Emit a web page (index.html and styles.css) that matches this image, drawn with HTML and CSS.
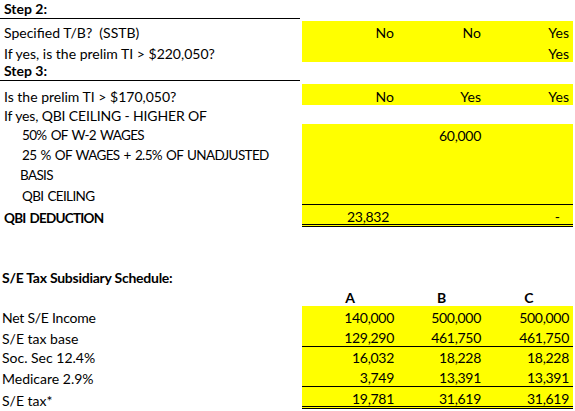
FILE: index.html
```html
<!DOCTYPE html>
<html>
<head>
<meta charset="utf-8">
<link rel="stylesheet" href="styles.css">
</head>
<body>
<div class="sheet">
  <div class="row h21 step">
    <div class="label bold underline">Step 2:</div>
    <div></div><div></div><div></div>
  </div>
  <div class="row h20">
    <div class="label">Specified T/B?&nbsp; (SSTB)</div>
    <div class="val y">No</div><div class="val y">No</div><div class="val y">Yes</div>
  </div>
  <div class="row h21">
    <div class="label">If yes, is the prelim TI &gt; $220,050?</div>
    <div class="val y"></div><div class="val y"></div><div class="val y">Yes</div>
  </div>
  <div class="row h22 step">
    <div class="label bold underline">Step 3:</div>
    <div></div><div></div><div></div>
  </div>
  <div class="row h21">
    <div class="label">Is the prelim TI &gt; $170,050?</div>
    <div class="val y">No</div><div class="val y">Yes</div><div class="val y">Yes</div>
  </div>
  <div class="row h19">
    <div class="label caps-mix">If yes, QBI CEILING - HIGHER OF</div>
    <div></div><div></div><div></div>
  </div>
  <div class="row h20">
    <div class="label ind caps">50% OF W-2 WAGES</div>
    <div class="val y"></div><div class="val y num">60,000</div><div class="val y"></div>
  </div>
  <div class="row h20">
    <div class="label ind caps">25 % OF WAGES + 2.5% OF UNADJUSTED</div>
    <div class="val y"></div><div class="val y"></div><div class="val y"></div>
  </div>
  <div class="row h20">
    <div class="label ind2 caps">BASIS</div>
    <div class="val y"></div><div class="val y"></div><div class="val y"></div>
  </div>
  <div class="row h21">
    <div class="label ind caps">QBI CEILING</div>
    <div class="val y line"></div><div class="val y line"></div><div class="val y line"></div>
  </div>
  <div class="row h22">
    <div class="label bold caps-b">QBI DEDUCTION</div>
    <div class="val y dbl acct num">23,832</div><div class="val y dbl"></div><div class="val y dbl dash">-</div>
  </div>
  <div class="spacer"></div>
  <div class="row h20 low">
    <div class="label bold tight">S/E Tax Subsidiary Schedule:</div>
    <div></div><div></div><div></div>
  </div>
  <div class="row h20 low">
    <div class="label"></div>
    <div class="hdr bold">A</div><div class="hdr bold">B</div><div class="hdr bold">C</div>
  </div>
  <div class="row h20 low">
    <div class="label tight">Net S/E Income</div>
    <div class="val y num">140,000</div><div class="val y num">500,000</div><div class="val y num">500,000</div>
  </div>
  <div class="row h21 low">
    <div class="label">S/E tax base</div>
    <div class="val y line num">129,290</div><div class="val y line num">461,750</div><div class="val y line num">461,750</div>
  </div>
  <div class="row h19 low">
    <div class="label">Soc. Sec 12.4%</div>
    <div class="val y num">16,032</div><div class="val y num">18,228</div><div class="val y num">18,228</div>
  </div>
  <div class="row h21 low">
    <div class="label">Medicare 2.9%</div>
    <div class="val y line num">3,749</div><div class="val y line num">13,391</div><div class="val y line num">13,391</div>
  </div>
  <div class="row h22 low">
    <div class="label">S/E tax*</div>
    <div class="val y dbl num">19,781</div><div class="val y dbl num">31,619</div><div class="val y dbl num">31,619</div>
  </div>
</div>
</body>
</html>
```

FILE: styles.css
```css
* { box-sizing: border-box; }
html, body { margin: 0; padding: 0; background: #fff; }
body {
  font-family: Lato, "Noto Sans", sans-serif;
  font-size: 14px;
  color: #000;
}
.sheet { width: 575px; }
.row {
  display: grid;
  grid-template-columns: 302px 96px 87px 88px;
}
.h19 { height: 19px; }
.h20 { height: 20px; }
.h21 { height: 21px; }
.h22 { height: 22px; }
.row > div {
  display: flex;
  align-items: flex-end;
  line-height: 15px;
  padding-bottom: 1px;
  white-space: nowrap;
}
.label { padding-left: 4px; }
.low .label { padding-left: 2px; }
.ind { padding-left: 22px !important; }
.ind2 { padding-left: 20px !important; }
.bold { font-weight: 700; }
.caps { font-size: 13.5px; letter-spacing: -0.65px; word-spacing: 1.3px; }
.caps-mix { letter-spacing: -0.15px; }
.caps-b { font-size: 13.5px; letter-spacing: -0.75px; word-spacing: 1.3px; }
.tight { letter-spacing: -0.25px; }
.num { letter-spacing: -0.3px; }
.step .label.underline {
  height: 19px;
  align-self: start;
  margin-right: 2px;
  border-bottom: 1px solid #000;
  padding-bottom: 2px;
}
.val { justify-content: flex-end; padding-right: 4px; }
.y { background: #ffff00; }
.line { border-bottom: 1px solid #000; }
.dbl { border-bottom: 3px double #000; padding-bottom: 0 !important; }
.acct { padding-right: 9px; }
.dash { padding-right: 13px; }
.hdr { justify-content: center; }
.spacer { height: 39px; }
```
